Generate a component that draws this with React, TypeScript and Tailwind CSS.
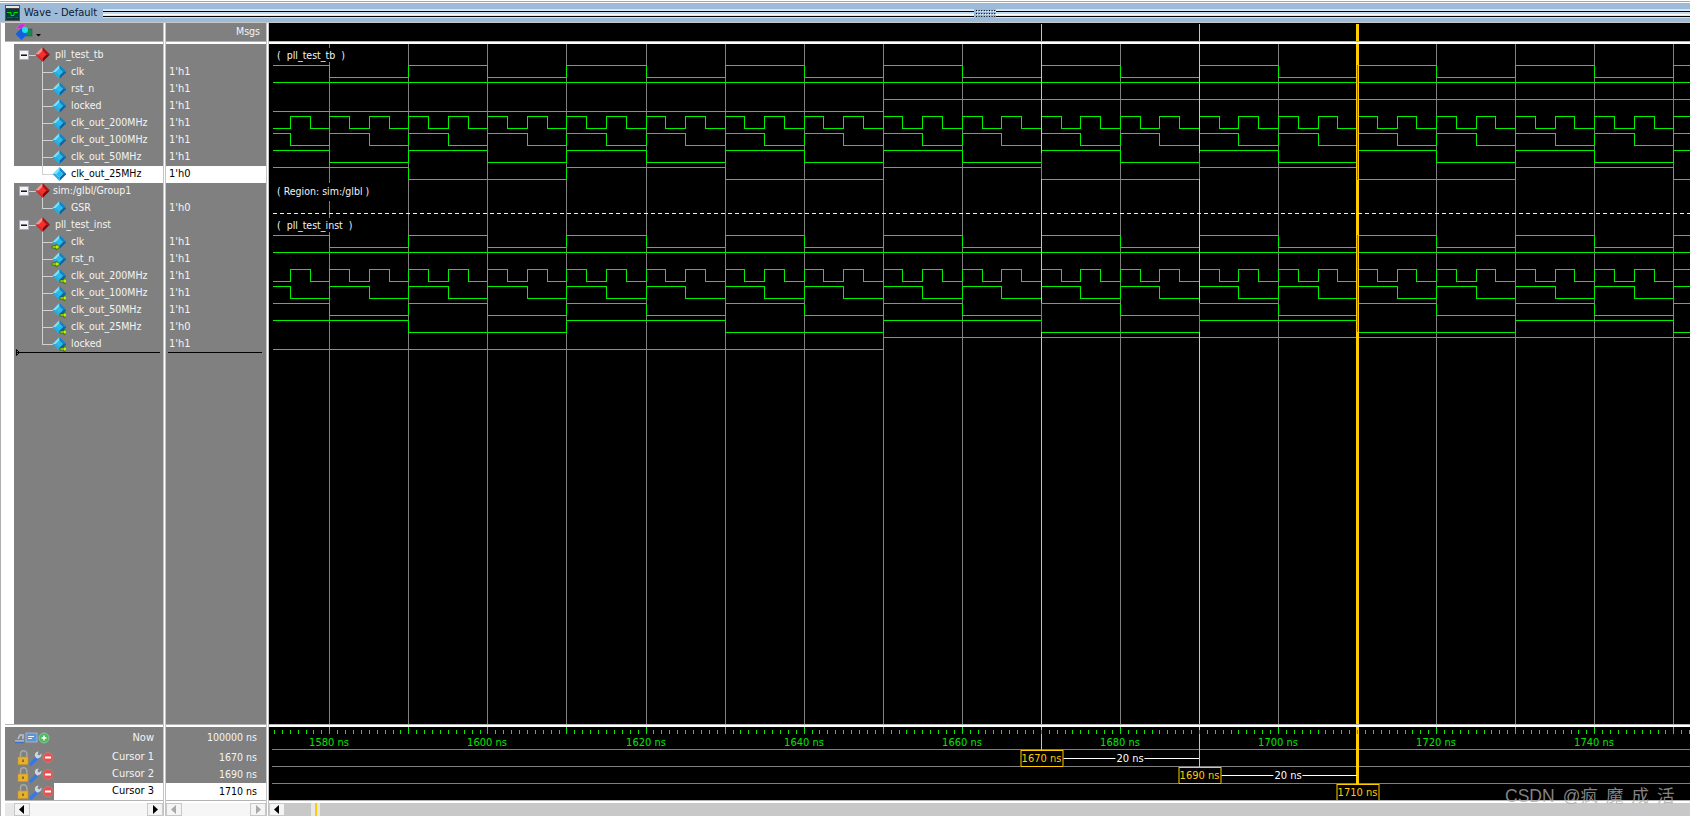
import React from "react";

const X = (t: number) => Math.round(329.3 + 7.906 * (t - 1580));
const OX = 269;
const OY = 44;
const GREEN = "#00f000";

type Lvl = (t: number) => boolean;
const mod = (a: number, b: number) => ((a % b) + b) % b;
const clk: Lvl = (t) => mod(t - 1590, 20) < 10;
const c200: Lvl = (t) => mod(t - 1580, 5) < 2.5;
const c100: Lvl = (t) => mod(t - 1580, 10) < 5;
const c25: Lvl = (t) => mod(t - 1590, 40) >= 20;
const lock: Lvl = (t) => t >= 1650;
const one: Lvl = () => true;

const wave = (hi: number, lo: number, f: Lvl) => {
  const yh = hi - OY + 0.5;
  const yl = lo - OY + 0.5;
  let y = f(1572.5) ? yh : yl;
  let d = `M${273 - OX} ${y}`;
  for (let t = 1575; t < 1752; t += 2.5) {
    const ny = f(t) ? yh : yl;
    if (ny !== y) {
      const x = X(t) - OX + 0.5;
      d += `H${x}V${ny}`;
      y = ny;
    }
  }
  return d + `H${1690 - OX}`;
};

const waves: [number, number, Lvl][] = [
  [65, 77, clk],
  [82, 94, one],
  [99, 111, lock],
  [116, 128, c200],
  [133, 145, c100],
  [150, 162, clk],
  [167, 179, c25],
  [235, 247, clk],
  [252, 264, one],
  [269, 281, c200],
  [286, 298, c100],
  [303, 315, clk],
  [320, 332, c25],
  [337, 349, lock],
];

const tens: number[] = [];
for (let t = 1580; t <= 1750; t += 10) tens.push(t);
const labels = tens.filter((t) => t % 20 === 0);
const ticks: number[] = [];
for (let t = 1573; t <= 1752; t++) ticks.push(t);

function Diamond({ cx, cy, r, kind }: { cx: number; cy: number; r: number; kind: "red" | "blue" }) {
  const c =
    kind === "red"
      ? { t: "#ff9090", l: "#ee2020", r: "#c00808", b: "#900000", m: "#ff2c2c" }
      : { t: "#7fe0fa", l: "#1fb0e8", r: "#0c86c6", b: "#0a66a8", m: "#22bdf2" };
  const i = r * 0.5;
  const T = `${cx},${cy - r}`;
  const R = `${cx + r},${cy}`;
  const B = `${cx},${cy + r}`;
  const L = `${cx - r},${cy}`;
  const t = `${cx},${cy - i}`;
  const rr = `${cx + i},${cy}`;
  const b = `${cx},${cy + i}`;
  const l = `${cx - i},${cy}`;
  return (
    <g>
      <polygon points={`${L} ${T} ${t} ${l}`} fill={c.t} />
      <polygon points={`${T} ${R} ${rr} ${t}`} fill={c.r} />
      <polygon points={`${R} ${B} ${b} ${rr}`} fill={c.b} />
      <polygon points={`${B} ${L} ${l} ${b}`} fill={c.l} />
      <polygon points={`${t} ${rr} ${b} ${l}`} fill={c.m} />
    </g>
  );
}

function GreenArrow({ x, y }: { x: number; y: number }) {
  return (
    <polygon
      transform={`translate(${x} ${y})`}
      points="0,2 4,2 4,0 8,3 4,6 4,4 0,4"
      fill="#b8f010"
      stroke="#246000"
      strokeWidth="0.7"
    />
  );
}

type Row = {
  kind: "head" | "child";
  label: string;
  value?: string;
  arrow?: "in" | "out";
  last?: boolean;
  sel?: boolean;
  tight?: boolean;
  kids?: boolean;
};

const rows: Row[] = [
  { kind: "head", label: "pll_test_tb", kids: true },
  { kind: "child", label: "clk", value: "1'h1" },
  { kind: "child", label: "rst_n", value: "1'h1" },
  { kind: "child", label: "locked", value: "1'h1" },
  { kind: "child", label: "clk_out_200MHz", value: "1'h1" },
  { kind: "child", label: "clk_out_100MHz", value: "1'h1" },
  { kind: "child", label: "clk_out_50MHz", value: "1'h1" },
  { kind: "child", label: "clk_out_25MHz", value: "1'h0", last: true, sel: true },
  { kind: "head", label: "sim:/glbl/Group1", tight: true, kids: true },
  { kind: "child", label: "GSR", value: "1'h0", last: true },
  { kind: "head", label: "pll_test_inst", kids: true },
  { kind: "child", label: "clk", value: "1'h1", arrow: "in" },
  { kind: "child", label: "rst_n", value: "1'h1", arrow: "in" },
  { kind: "child", label: "clk_out_200MHz", value: "1'h1", arrow: "out" },
  { kind: "child", label: "clk_out_100MHz", value: "1'h1", arrow: "out" },
  { kind: "child", label: "clk_out_50MHz", value: "1'h1", arrow: "out" },
  { kind: "child", label: "clk_out_25MHz", value: "1'h0", arrow: "out" },
  { kind: "child", label: "locked", value: "1'h1", arrow: "out", last: true },
];

function TreeIcon({ r }: { r: Row }) {
  if (r.kind === "head") {
    return (
      <svg width="36" height="17" className="flex-none">
        <rect x="5.5" y="3.5" width="9" height="9" fill="#f4f4f8" stroke="#a8a8b8" />
        <rect x="7" y="7.5" width="6" height="1.4" fill="#000" />
        <line x1="15" x2="22" y1="8.5" y2="8.5" stroke="#d0d0d0" />
        {r.kids && <line x1="28.5" x2="28.5" y1="14" y2="17" stroke="#d0d0d0" />}
        <Diamond cx={28.5} cy={7.5} r={7.5} kind="red" />
      </svg>
    );
  }
  return (
    <svg width="52" height="17" className="flex-none">
      <line x1="28.5" x2="28.5" y1="0" y2={r.last ? 8.5 : 17} stroke="#d0d0d0" />
      <line x1="28" x2="39" y1="8.5" y2="8.5" stroke="#d0d0d0" />
      <Diamond cx={45.5} cy={8} r={7} kind="blue" />
      {r.arrow === "in" && <GreenArrow x={38} y={10} />}
      {r.arrow === "out" && <GreenArrow x={46} y={10} />}
    </svg>
  );
}

function TitleBar() {
  return (
    <div className="h-[23px] flex-none flex flex-col bg-white">
      <div className="h-[1px] mt-[1px] bg-[#a8a8a8]" />
      <div className="h-[19px] mt-[1px] bg-[#9dbbd8] flex items-center pl-[5px] relative">
        <svg width="15" height="16" className="flex-none">
          <rect x="0.5" y="0.5" width="14" height="15" fill="#e8e8e8" stroke="#505050" />
          <rect x="1" y="4" width="13" height="11" fill="#003c3c" />
          <rect x="1" y="3" width="13" height="1" fill="#404040" />
          <path d="M2 7.5H6V10.5H9V7.5H13" stroke="#00e000" fill="none" />
          <path d="M2 12.5H8M10 12.5H13" stroke="#2040ff" fill="none" />
        </svg>
        <span className="ml-[4px] text-[11px] leading-none text-[#101830] w-[79px] flex-none whitespace-nowrap">
          Wave - Default
        </span>
        <div className="flex-1 flex flex-col h-[9px] mt-[1px]">
          <div className="h-[1px] bg-[#cfe4f2]" />
          <div className="h-[1px] bg-[#d8e8f4]" />
          <div className="h-[1px] bg-black" />
          <div className="h-[1px] bg-[#c4dcec]" />
          <div className="h-[1px] bg-[#c4dcec]" />
          <div className="h-[1px] bg-white" />
          <div className="h-[1px] bg-[#d8e8f4]" />
          <div className="h-[1px] bg-black" />
          <div className="h-[1px] bg-[#cfe4f2]" />
        </div>
        <svg width="22" height="9" className="absolute left-[974px] top-[6px]">
          <rect width="22" height="9" fill="#9dbbd8" />
          {[0, 1, 2].map((r) =>
            [0, 1, 2, 3, 4, 5, 6, 7].map((c) => (
              <rect key={`${r}-${c}`} x={2 + c * 2.6} y={1 + r * 3} width="1" height="1" fill="#000" />
            ))
          )}
          {[0, 1].map((r) =>
            [0, 1, 2, 3, 4, 5, 6, 7].map((c) => (
              <rect key={`w${r}-${c}`} x={3 + c * 2.6} y={2 + r * 3} width="1" height="1" fill="#fff" />
            ))
          )}
        </svg>
      </div>
      <div className="h-[1px] bg-[#c8c8c8]" />
    </div>
  );
}

function HSep() {
  return <div className="h-[3px] flex-none bg-white border-t border-[#b4b4b4]" />;
}

function VSplit() {
  return <div className="w-[3px] flex-none bg-white border-l border-[#c4c4c4] border-r" />;
}

function ArrowBtn({ dir, off }: { dir: "l" | "r"; off?: boolean }) {
  return (
    <div className="w-[16px] h-full flex-none bg-[#f4f4f4] border border-[#c8c8c8] flex items-center justify-center">
      <svg width="6" height="9">
        <polygon points={dir === "l" ? "5,0 5,9 0,4.5" : "1,0 1,9 6,4.5"} fill={off ? "#a8a8a8" : "#000"} />
      </svg>
    </div>
  );
}

function ScrollBar({ off }: { off?: boolean }) {
  return (
    <div className="h-[13px] flex-none flex bg-[#f2f2f2]">
      <ArrowBtn dir="l" off={off} />
      <div className="flex-1 bg-[#f6f6f6]" />
      <ArrowBtn dir="r" off={off} />
    </div>
  );
}

function LockIcons() {
  return (
    <svg width="36" height="17" className="flex-none">
      <path d="M3.5 8V5a3.2 3.2 0 0 1 6.4 0V8" fill="none" stroke="#a8a8a8" strokeWidth="1.5" />
      <rect x="1" y="8" width="10" height="7.5" fill="#e8b030" stroke="#c09428" strokeWidth="0.6" />
      <rect x="5" y="10.5" width="2" height="2.5" fill="#906c18" />
      <path d="M14 15L20.5 8.5" stroke="#3a78e0" strokeWidth="3.6" strokeLinecap="round" />
      <path d="M20 9.5C23 9.5 25 7 24.5 4.5L22.2 6.5L20.5 5.5L21.5 2.5C18.5 2.5 17 5.5 18.5 8Z" fill="#d0d6e0" />
      <circle cx="31" cy="8.5" r="5" fill="#e85050" stroke="#c88080" strokeWidth="0.7" />
      <rect x="28" y="7.5" width="6" height="2" fill="#fff" />
    </svg>
  );
}

function CursorRow({ label, sel }: { label: string; sel?: boolean }) {
  return (
    <div className="h-[17px] flex items-center pl-[12px]">
      <LockIcons />
      <div
        className={
          sel
            ? "ml-[1px] flex-1 h-full bg-white text-black flex items-center justify-end pr-[9px] text-[11px]"
            : "ml-[1px] flex-1 h-full flex items-center justify-end pr-[9px] text-[11px]"
        }
      >
        {label}
      </div>
    </div>
  );
}

function WaveArea() {
  return (
    <div className="relative h-[680px] flex-none bg-black overflow-hidden">
      <svg width="1421" height="680" className="absolute inset-0" shapeRendering="crispEdges">
        {tens.map((t) => (
          <line key={t} x1={X(t) - OX + 0.5} x2={X(t) - OX + 0.5} y1="0" y2="680" stroke="#808080" />
        ))}
        {waves.map(([h, l, f], i) => (
          <path key={i} d={wave(h, l, f)} stroke={GREEN} fill="none" />
        ))}
        <line x1={1041.5 - OX} x2={1041.5 - OX} y1="0" y2="680" stroke="#ffcc00" />
        <line x1={1199.5 - OX} x2={1199.5 - OX} y1="0" y2="680" stroke="#ffcc00" />
        <rect x={1356 - OX} y="0" width="3" height="680" fill="#ffcc00" />
        <line x1={1041.5 - OX} x2={1041.5 - OX} y1={153 - OY} y2={179 - OY} stroke="#9a6a9a" />
        <line x1={1199.5 - OX} x2={1199.5 - OX} y1={153 - OY} y2={179 - OY} stroke="#9a6a9a" />
        <line x1={1041.5 - OX} x2={1041.5 - OX} y1={303 - OY} y2={332 - OY} stroke="#9a6a9a" />
        <line x1={1199.5 - OX} x2={1199.5 - OX} y1={303 - OY} y2={332 - OY} stroke="#9a6a9a" />
        <line x1={1357.5 - OX} x2={1357.5 - OX} y1={65 - OY} y2={180 - OY} stroke="#e84010" />
        <line x1={1357.5 - OX} x2={1357.5 - OX} y1={235 - OY} y2={332 - OY} stroke="#e84010" />
      </svg>
      <span className="absolute left-[8px] top-[4px] h-[14px] leading-[14px] pr-[1px] bg-black text-[#f4f4f4] whitespace-pre">
        (  pll_test_tb  )
      </span>
      <div className="absolute left-0 top-[139px] w-[66px] h-[18px] bg-black" />
      <span className="absolute left-[8px] top-[140px] h-[14px] leading-[14px] pr-[1px] bg-black text-[#f4f4f4] whitespace-pre">
        ( Region: sim:/glbl )
      </span>
      <svg width="1421" height="1" className="absolute left-0 top-[169px]" shapeRendering="crispEdges">
        <line x1="4" x2="1421" y1="0.5" y2="0.5" stroke="#f0f0f0" strokeDasharray="4 3" />
      </svg>
      <span className="absolute left-[8px] top-[174px] h-[14px] leading-[14px] pr-[1px] bg-black text-[#f4f4f4] whitespace-pre">
        (  pll_test_inst  )
      </span>
    </div>
  );
}

function CursorBox({ t, top }: { t: number; top: string }) {
  return (
    <div
      className={`absolute ${top} w-[43px] h-[17px] -translate-x-1/2 bg-black border border-[#ffcc00] text-[#ffcc00] text-[11px] flex items-center justify-center leading-none`}
      style={{ left: X(t) - OX + 0.5 }}
    >
      {t} ns
    </div>
  );
}

function TimeArea() {
  const cross = (x: number, y2: number, w = 1) =>
    w === 1 ? (
      <line x1={x - OX + 0.5} x2={x - OX + 0.5} y1="0" y2={y2} stroke="#ffcc00" />
    ) : (
      <rect x={x - 1 - OX} y="0" width="3" height={y2} fill="#ffcc00" />
    );
  return (
    <div className="relative h-[73px] flex-none bg-black overflow-hidden text-[11px]">
      <svg width="1421" height="73" className="absolute inset-0" shapeRendering="crispEdges">
        {ticks.map((t) => (
          <line
            key={t}
            x1={X(t) - OX + 0.5}
            x2={X(t) - OX + 0.5}
            y1={t % 10 === 0 ? 0 : 3}
            y2="7"
            stroke={GREEN}
          />
        ))}
        {[22, 39, 56].map((y) => (
          <line key={y} x1="3" x2="1421" y1={y + 0.5} y2={y + 0.5} stroke="#808080" />
        ))}
        {cross(1041, 23)}
        {cross(1199, 40)}
        {cross(1357, 57, 3)}
        {[1041, 1199].map((x) => (
          <line key={x} x1={x - OX + 0.5} x2={x - OX + 0.5} y1="3" y2="7" stroke="#e84010" />
        ))}
        <line x1={1357.5 - OX} x2={1357.5 - OX} y1="3" y2="7" stroke="#e84010" />
        <line x1={1063 - OX} x2={1199 - OX} y1="31.5" y2="31.5" stroke="#fff" />
        <line x1={1221 - OX} x2={1357 - OX} y1="48.5" y2="48.5" stroke="#fff" />
      </svg>
      {labels.map((t) => (
        <span
          key={t}
          className="absolute top-[9px] h-[14px] leading-[14px] -translate-x-1/2 text-[#00e800] whitespace-nowrap"
          style={{ left: X(t) - OX }}
        >
          {t} ns
        </span>
      ))}
      <CursorBox t={1670} top="top-[23px]" />
      <CursorBox t={1690} top="top-[40px]" />
      <CursorBox t={1710} top="top-[57px]" />
      <span className="absolute left-[861px] -translate-x-1/2 top-[25px] h-[14px] leading-[14px] px-[1px] bg-black text-white whitespace-nowrap">
        20 ns
      </span>
      <span className="absolute left-[1019px] -translate-x-1/2 top-[42px] h-[14px] leading-[14px] px-[1px] bg-black text-white whitespace-nowrap">
        20 ns
      </span>
    </div>
  );
}

export default function App() {
  return (
    <div className="relative w-[1690px] h-[816px] overflow-hidden flex flex-col bg-white text-[10.5px] text-[#f4f4f4] font-['DejaVu_Sans_Condensed','DejaVu_Sans',sans-serif]">
      <TitleBar />
      <div className="flex-1 min-h-0 flex pl-[4px] border-l border-[#b0b0b0]">
        {/* name column */}
        <div className="w-[158px] flex-none flex flex-col">
          <div className="h-[18px] flex-none bg-[#808080] flex items-center pl-[10px]">
            <svg width="30" height="16" className="flex-none">
              <polygon points="1,4 6,0 11,0 6,5" fill="#c030d0" stroke="#e070e8" strokeWidth="0.5" />
              <rect x="10" y="5" width="7" height="7" fill="#109050" stroke="#086030" strokeWidth="0.5" />
              <polygon points="6.5,4 12.5,10 6.5,16 0.5,10" fill="#1060e0" />
              <circle cx="10" cy="6" r="3" fill="#20e0f0" />
              <polygon points="21,10 26,10 23.5,12.5" fill="#000" />
            </svg>
          </div>
          <HSep />
          <div className="h-[680px] flex-none pl-[9px] bg-white">
            <div className="h-full bg-[#808080] pt-[3px] relative">
              {rows.map((r, i) => (
                <div
                  key={i}
                  className={
                    r.sel
                      ? "h-[17px] flex items-center bg-white text-black"
                      : "h-[17px] flex items-center"
                  }
                >
                  <TreeIcon r={r} />
                  <span
                    className={
                      r.kind === "child"
                        ? "ml-[5px] mb-[2px] whitespace-nowrap"
                        : r.tight
                          ? "ml-[3px] mb-[2px] whitespace-nowrap"
                          : "ml-[5px] mb-[2px] whitespace-nowrap"
                    }
                  >
                    {r.label}
                  </span>
                </div>
              ))}
              <div className="-mt-[1px] ml-[3px] w-[143px] h-[1px] bg-black" />
              <svg width="4" height="7" className="absolute left-[2px] top-[305px]">
                <polygon points="0.5,0.5 3.5,3.5 0.5,6.5" fill="none" stroke="#000" />
              </svg>
            </div>
          </div>
          <HSep />
          <div className="h-[73px] flex-none bg-[#808080]">
            <div className="h-[22px] flex items-center pl-[9px]">
              <svg width="36" height="12" className="flex-none">
                <path d="M1 9H10M4 7L6 3H9V7" stroke="#b8c0d0" strokeWidth="1.6" fill="none" />
                <path d="M1 10.5H10" stroke="#4070c8" strokeWidth="1.4" />
                <rect x="12" y="1" width="11" height="9" fill="#5c94d8" stroke="#c0d0e8" strokeWidth="0.6" />
                <rect x="14" y="4" width="6" height="1" fill="#f0f0f0" />
                <rect x="14" y="6" width="4" height="1" fill="#f0f0f0" />
                <circle cx="30" cy="6" r="5" fill="#50b860" stroke="#90d898" strokeWidth="0.7" />
                <path d="M27.5 6H32.5M30 3.5V8.5" stroke="#fff" strokeWidth="1.4" />
              </svg>
              <span className="flex-1 text-right pr-[9px] text-[11px]">Now</span>
            </div>
            <CursorRow label="Cursor 1" />
            <CursorRow label="Cursor 2" />
            <CursorRow label="Cursor 3" sel />
          </div>
          <HSep />
          <div className="pl-[9px] bg-[#e8e8e8]">
            <ScrollBar />
          </div>
        </div>
        <VSplit />
        {/* value column */}
        <div className="w-[100px] flex-none flex flex-col">
          <div className="h-[18px] flex-none bg-[#808080] flex items-center justify-end pr-[6px]">Msgs</div>
          <HSep />
          <div className="h-[680px] flex-none bg-[#808080] pt-[3px] text-[11px]">
            {rows.map((r, i) => (
              <div
                key={i}
                className={
                  r.sel
                    ? "h-[17px] flex items-center pl-[3px] bg-white text-black"
                    : "h-[17px] flex items-center pl-[3px]"
                }
              >
                {r.value}
              </div>
            ))}
            <div className="-mt-[1px] ml-[2px] w-[94px] h-[1px] bg-black" />
          </div>
          <HSep />
          <div className="h-[73px] flex-none bg-[#808080]">
            <div className="h-[22px] flex items-center justify-end pr-[9px]">100000 ns</div>
            <div className="h-[17px] flex items-center justify-end pr-[9px]">1670 ns</div>
            <div className="h-[17px] flex items-center justify-end pr-[9px]">1690 ns</div>
            <div className="h-[17px] flex items-center justify-end pr-[9px] bg-white text-black">1710 ns</div>
          </div>
          <HSep />
          <ScrollBar off />
        </div>
        <VSplit />
        {/* wave column */}
        <div className="flex-1 min-w-0 flex flex-col">
          <div className="h-[18px] flex-none bg-black">
            <svg width="1421" height="18" shapeRendering="crispEdges">
              <line x1={1041.5 - OX} x2={1041.5 - OX} y1="1" y2="18" stroke="#ffcc00" />
              <line x1={1199.5 - OX} x2={1199.5 - OX} y1="1" y2="18" stroke="#ffcc00" />
              <rect x={1356 - OX} y="1" width="3" height="17" fill="#ffcc00" />
            </svg>
          </div>
          <HSep />
          <WaveArea />
          <HSep />
          <TimeArea />
          <HSep />
          <div className="h-[13px] flex-none flex bg-[#c8c8c8]">
            <ArrowBtn dir="l" />
            <div className="ml-[26px] w-[9px] h-full bg-[#e8e8e8] flex justify-center">
              <div className="w-[2px] h-full bg-[#ffcc00]" />
            </div>
          </div>
        </div>
      </div>
      <span className="absolute left-[1505px] top-[784px] text-[17.5px] leading-[24px] [word-spacing:3.2px] whitespace-pre text-[#a8a8a8]/80 font-['Liberation_Sans','Noto_Sans_CJK_SC',sans-serif]">
        CSDN @疯 魔 成 活
      </span>
    </div>
  );
}
